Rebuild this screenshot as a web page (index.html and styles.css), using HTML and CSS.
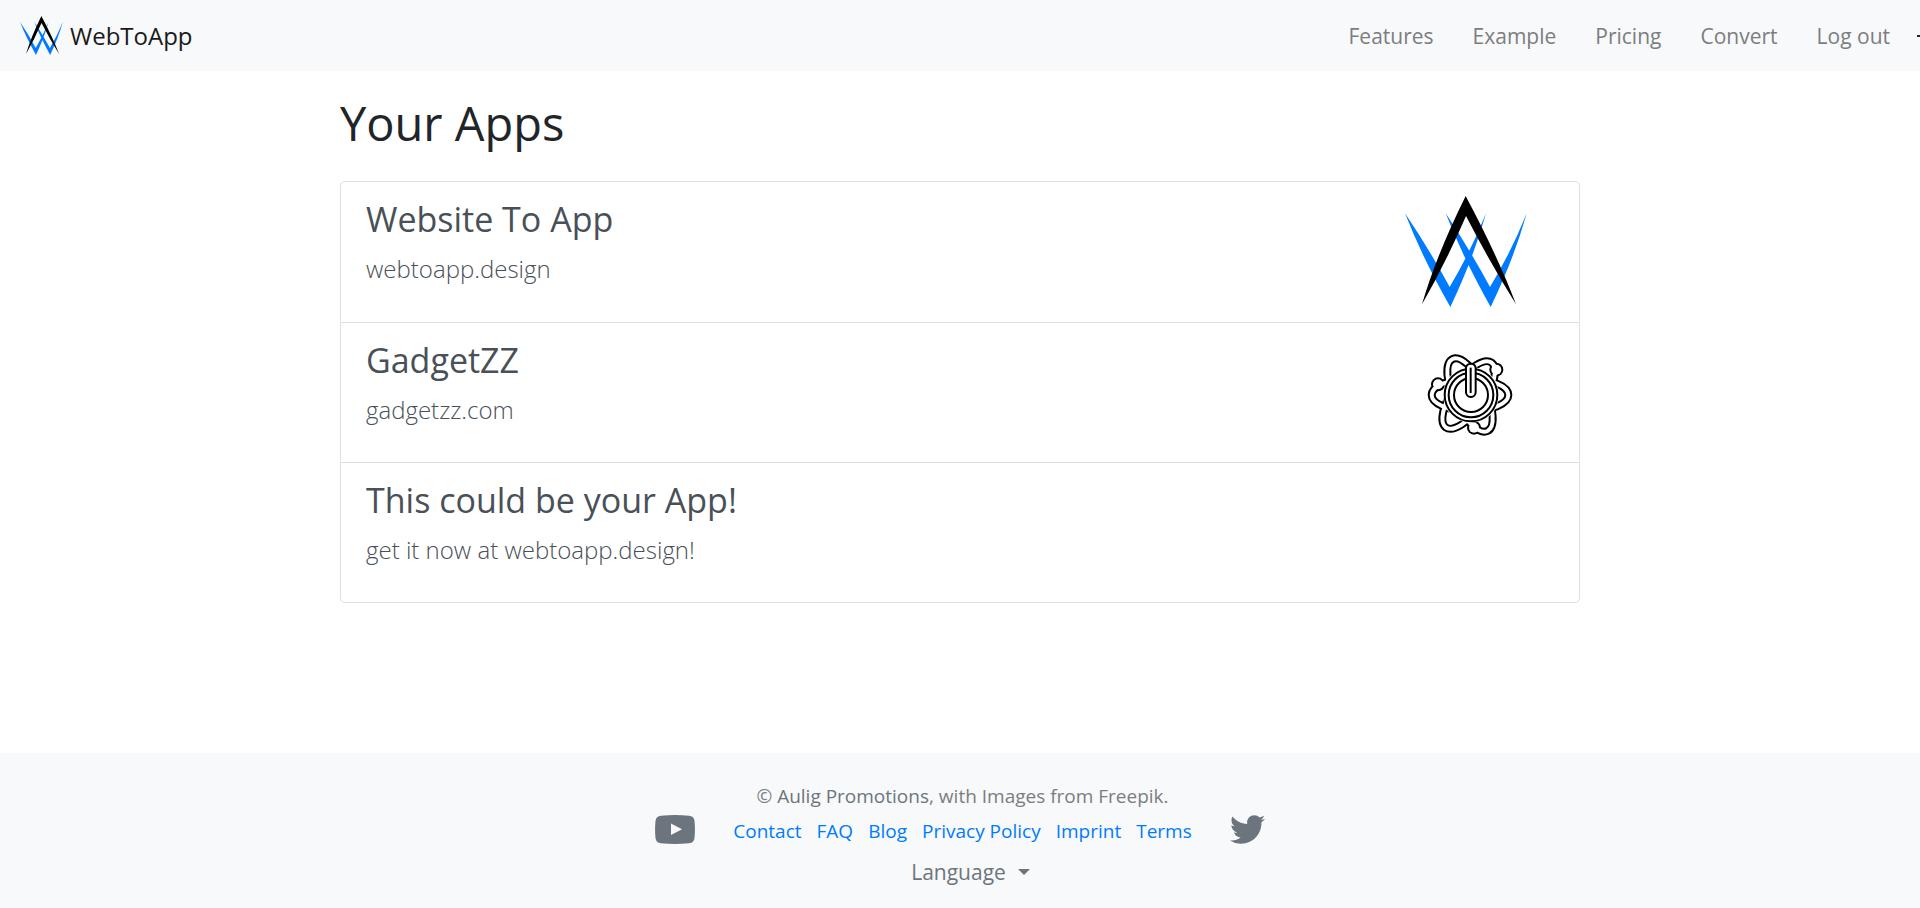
FILE: index.html
```html
<!DOCTYPE html>
<html lang="en">
<head>
    <meta charset="UTF-8">
    <meta name="viewport" content="width=device-width, initial-scale=1.0">
    <title>WebToApp - Your Apps</title>
    <link rel="stylesheet" href="styles.css">
</head>
<body>
    <nav class="navbar">
        <a class="brand" href="#">
            <svg class="brand-logo" viewBox="72 75 366 333" aria-hidden="true">
                <path fill="#007bff" d="M72 127Q148 240 206 348Q270 240 315 127Q278 260 208 408Q124 260 72 127ZM194 127Q269 240 327 348Q392 240 437 127Q400 260 329 408Q246 260 194 127Z"/>
                <path d="M254 75Q350 255 405 400Q330 280 255 135Q192 280 123 400Q165 255 254 75Z"/>
            </svg>
            WebToApp
        </a>
        <div class="nav-links">
            <a href="#">Features</a>
            <a href="#">Example</a>
            <a href="#">Pricing</a>
            <a href="#">Convert</a>
            <a href="#">Log out</a>
        </div>
        <span class="nav-mark"></span>
    </nav>

    <main class="container">
        <h1>Your Apps</h1>
        <div class="app-list">
            <a class="app" href="#">
                <div class="app-text">
                    <h2>Website To App</h2>
                    <p>webtoapp.design</p>
                </div>
                <svg class="app-icon" viewBox="60 63 420 360" aria-hidden="true">
                    <path fill="#007bff" d="M72 127Q148 240 206 348Q270 240 315 127Q278 260 208 408Q124 260 72 127ZM194 127Q269 240 327 348Q392 240 437 127Q400 260 329 408Q246 260 194 127Z"/>
                    <path d="M254 75Q350 255 405 400Q330 280 255 135Q192 280 123 400Q165 255 254 75Z"/>
                </svg>
            </a>
            <a class="app" href="#">
                <div class="app-text">
                    <h2>GadgetZZ</h2>
                    <p>gadgetzz.com</p>
                </div>
                <svg class="app-icon" viewBox="0 6 420 360" fill="none" aria-hidden="true">
                    <!-- orbits -->
                    <g stroke="#000" stroke-width="24">
                        <ellipse cx="207" cy="192" rx="115" ry="48"/>
                        <ellipse cx="207" cy="192" rx="120" ry="48" transform="rotate(64 207 192)"/>
                        <ellipse cx="203" cy="192" rx="119" ry="48" transform="rotate(-55 203 192)"/>
                    </g>
                    <g fill="#000">
                        <circle cx="286" cy="116" r="21"/>
                        <circle cx="111" cy="160" r="21"/>
                        <circle cx="219" cy="290" r="21"/>
                    </g>
                    <g stroke="#fff" stroke-width="12">
                        <ellipse cx="207" cy="192" rx="115" ry="48"/>
                        <ellipse cx="207" cy="192" rx="120" ry="48" transform="rotate(64 207 192)"/>
                        <ellipse cx="203" cy="192" rx="119" ry="48" transform="rotate(-55 203 192)"/>
                    </g>
                    <g fill="#fff">
                        <circle cx="286" cy="116" r="15"/>
                        <circle cx="111" cy="160" r="15"/>
                        <circle cx="219" cy="290" r="15"/>
                    </g>
                    <!-- power button -->
                    <circle cx="210" cy="192" r="84" fill="#fff"/>
                    <g stroke="#000" stroke-width="6">
                        <circle cx="210" cy="192" r="79"/>
                        <circle cx="210" cy="192" r="67"/>
                        <circle cx="210" cy="192" r="51"/>
                        <rect x="195" y="98" width="29" height="100" rx="14" fill="#fff"/>
                        <path d="M209 110V186"/>
                    </g>
                </svg>
            </a>
            <a class="app" href="#">
                <div class="app-text">
                    <h2>This could be your App!</h2>
                    <p>get it now at webtoapp.design!</p>
                </div>
            </a>
        </div>
    </main>

    <footer class="footer">
        <a class="social" href="#" aria-label="YouTube">
            <svg width="40" height="29" viewBox="0 0 40 29" aria-hidden="true">
                <path fill="currentColor" fill-rule="evenodd" d="M6 .8Q20-.6 34 .8Q39 1.200 39.500 6Q40.400 14.500 39.500 23Q39 27.800 34 28.200Q20 29.600 6 28.200Q1 27.800 .5 23Q-.4 14.500 .5 6Q1 1.200 6 .8ZM16 8.500V20L27 14.300Z"/>
            </svg>
        </a>
        <div class="footer-center">
            <p class="copyright">© <a href="#">Aulig Promotions</a>, with Images from Freepik.</p>
            <div class="footer-links">
                <a href="#">Contact</a>
                <a href="#">FAQ</a>
                <a href="#">Blog</a>
                <a href="#">Privacy Policy</a>
                <a href="#">Imprint</a>
                <a href="#">Terms</a>
            </div>
            <button class="language" type="button">Language</button>
        </div>
        <a class="social" href="#" aria-label="Twitter">
            <svg width="35" height="29" viewBox="0 48 512 416" aria-hidden="true">
                <path fill="currentColor" d="M459.370 151.716c.325 4.548.325 9.097.325 13.645 0 138.720-105.583 298.558-298.558 298.558-59.452 0-114.680-17.219-161.137-47.106 8.447.974 16.568 1.299 25.340 1.299 49.055 0 94.213-16.568 130.274-44.832-46.132-.975-84.792-31.188-98.112-72.772 6.498.974 12.995 1.624 19.818 1.624 9.421 0 18.843-1.300 27.614-3.573-48.081-9.747-84.143-51.980-84.143-102.985v-1.299c13.969 7.797 30.214 12.670 47.431 13.319-28.264-18.843-46.781-51.005-46.781-87.391 0-19.492 5.197-37.360 14.294-52.954 51.655 63.675 129.300 105.258 216.365 109.807-1.624-7.797-2.599-15.918-2.599-24.040 0-57.828 46.782-104.934 104.934-104.934 30.213 0 57.502 12.670 76.670 33.137 23.715-4.548 46.456-13.320 66.599-25.340-7.798 24.366-24.366 44.833-46.132 57.827 21.117-2.273 41.584-8.122 60.426-16.243-14.292 20.791-32.161 39.308-52.628 54.253z"/>
            </svg>
        </a>
    </footer>
</body>
</html>
```
FILE: styles.css
```css
* {
    box-sizing: border-box;
}
body {
    margin: 0;
    min-height: 100vh;
    display: flex;
    flex-direction: column;
    font-family: "Segoe UI", "Open Sans", "Noto Sans", sans-serif;
    font-size: 20px;
    color: #212529;
    background-color: #fff;
}
a {
    color: #007bff;
    text-decoration: none;
}
h1, h2, p {
    margin: 0;
    font-weight: 400;
}
.navbar {
    display: flex;
    align-items: center;
    height: 71px;
    padding-left: 20px;
    background-color: #f8f9fb;
}
.brand {
    display: flex;
    align-items: center;
    gap: 7px;
    margin-right: auto;
    font-size: 24px;
    color: #1a1a1a;
}
.brand-logo {
    width: 43px;
    height: 39px;
}
.nav-links {
    display: flex;
    gap: 39px;
    margin-right: 27px;
}
.nav-links a {
    font-size: 21px;
    color: #7c7d7e;
}
.nav-mark {
    width: 3px;
    height: 2px;
    background-color: #212529;
}
.container {
    width: 100%;
    max-width: 1240px;
    margin: 0 auto;
    padding-top: 22px;
}
h1 {
    margin-bottom: 28px;
    font-size: 47px;
    line-height: 60px;
}
.app-list {
    border: 1px solid #dfdfdf;
    border-radius: 5px;
}
.app {
    display: flex;
    justify-content: space-between;
    padding: 10px 38px 9px 25px;
    min-height: 140px;
    color: #495057;
}
.app + .app {
    border-top: 1px solid #dfdfdf;
}
.app-text {
    padding-top: 6px;
}
.app h2 {
    margin-bottom: 10px;
    font-size: 34px;
    line-height: 42px;
}
.app p {
    font-size: 24px;
    font-weight: 300;
    line-height: 38px;
}
.app-icon {
    width: 140px;
    height: 120px;
}
.footer {
    display: flex;
    justify-content: center;
    gap: 38px;
    margin-top: auto;
    padding: 27px 0 15px;
    background-color: #f8f9fb;
}
.footer-center {
    display: flex;
    flex-direction: column;
    align-items: center;
    color: #7c7d7e;
}
.copyright {
    line-height: 32px;
    font-size: 19px;
}
.copyright a, .social {
    color: #6c757d;
}
.footer-links {
    display: flex;
    gap: 15px;
    font-size: 19px;
    line-height: 38px;
}
.social {
    display: flex;
    padding-top: 35px;
}
.language {
    display: flex;
    align-items: center;
    gap: 12px;
    padding: 6px 0 5px 16px;
    border: none;
    background: none;
    color: #6c757d;
    font-family: inherit;
    font-size: 21px;
    line-height: 32px;
    cursor: pointer;
}
.language::after {
    content: "";
    border-top: 6px solid;
    border-left: 6px solid transparent;
    border-right: 6px solid transparent;
}
```
